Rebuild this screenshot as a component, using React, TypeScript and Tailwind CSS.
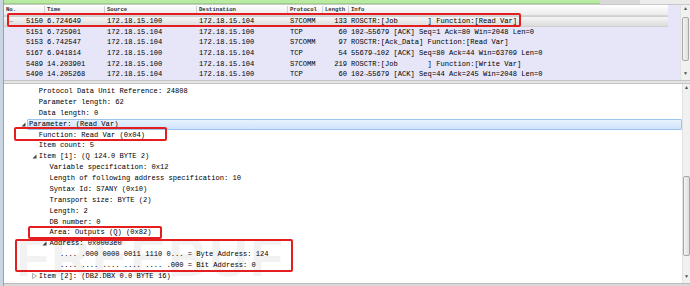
import React from "react";

const packets = [
  { no: "5150", time: "6.724649", src: "172.18.15.100", dst: "172.18.15.104", proto: "S7COMM", len: "133", info: "ROSCTR:[Job       ] Function:[Read Var]", sel: true },
  { no: "5151", time: "6.725901", src: "172.18.15.104", dst: "172.18.15.100", proto: "TCP", len: "60", info: "102→55679 [ACK] Seq=1 Ack=80 Win=2048 Len=0" },
  { no: "5153", time: "6.742547", src: "172.18.15.104", dst: "172.18.15.100", proto: "S7COMM", len: "97", info: "ROSCTR:[Ack_Data] Function:[Read Var]" },
  { no: "5167", time: "6.941814", src: "172.18.15.100", dst: "172.18.15.104", proto: "TCP", len: "54", info: "55679→102 [ACK] Seq=80 Ack=44 Win=63709 Len=0" },
  { no: "5489", time: "14.203901", src: "172.18.15.100", dst: "172.18.15.104", proto: "S7COMM", len: "219", info: "ROSCTR:[Job       ] Function:[Write Var]" },
  { no: "5490", time: "14.205268", src: "172.18.15.104", dst: "172.18.15.100", proto: "TCP", len: "60", info: "102→55679 [ACK] Seq=44 Ack=245 Win=2048 Len=0" },
];

type Line = { l: number; t: string; tog?: "open" | "closed"; hl?: boolean };

const lines: Line[] = [
  { l: 1, t: "Protocol Data Unit Reference: 24808" },
  { l: 1, t: "Parameter length: 62" },
  { l: 1, t: "Data length: 0" },
  { l: 0, t: "Parameter: (Read Var)", tog: "open", hl: true },
  { l: 1, t: "Function: Read Var (0x04)" },
  { l: 1, t: "Item count: 5" },
  { l: 1, t: "Item [1]: (Q 124.0 BYTE 2)", tog: "open" },
  { l: 2, t: "Variable specification: 0x12" },
  { l: 2, t: "Length of following address specification: 10" },
  { l: 2, t: "Syntax Id: S7ANY (0x10)" },
  { l: 2, t: "Transport size: BYTE (2)" },
  { l: 2, t: "Length: 2" },
  { l: 2, t: "DB number: 0" },
  { l: 2, t: "Area: Outputs (Q) (0x82)" },
  { l: 2, t: "Address: 0x0003e0", tog: "open" },
  { l: 3, t: ".... .000 0000 0011 1110 0... = Byte Address: 124" },
  { l: 3, t: ".... .... .... .... .... .000 = Bit Address: 0" },
  { l: 1, t: "Item [2]: (DB2.DBX 0.0 BYTE 16)", tog: "closed" },
];

const indent = ["w-[17px]", "w-[27.7px]", "w-[38.4px]", "w-[49px]"];

function Toggle({ kind }: { kind?: "open" | "closed" }) {
  if (!kind) return <span className="w-[7px] shrink-0" />;
  return (
    <span className="w-[7px] shrink-0 flex items-center">
      {kind === "open" ? (
        <svg width="5" height="5" viewBox="0 0 5 5">
          <polygon points="4.5,0.5 4.5,4.5 0.5,4.5" fill="#404040" />
        </svg>
      ) : (
        <svg width="5" height="6" viewBox="0 0 5 6">
          <polygon points="0.5,0.5 4.5,3 0.5,5.5" fill="none" stroke="#9a9a9a" strokeWidth="0.8" />
        </svg>
      )}
    </span>
  );
}

function Scrollbar({ thumb, width }: { thumb: string; width: string }) {
  return (
    <div className={`${width} shrink-0 flex flex-col bg-[#f1f1f1] border-l border-[#e2e2e2]`}>
      <div className="h-[10px] flex items-center justify-center text-[5px] text-[#505050]">▲</div>
      <div className="flex-1 flex flex-col">
        <div className={thumb} />
        <div className="flex-1" />
      </div>
      <div className="h-[10px] flex items-center justify-center text-[5px] text-[#505050]">▼</div>
    </div>
  );
}

export default function App() {
  return (
    <div className="relative w-[690px] h-[286px] overflow-hidden bg-white flex font-['Liberation_Mono',monospace] text-black">
      <div className="w-[4px] shrink-0 bg-[#c9d5e3] border-r border-[#8ea3bb]" />

      <div className="flex-1 flex flex-col min-w-0">
        <div className="h-[4px] flex shrink-0">
          <div className="w-[596px] bg-[#b9eaa2] border-b border-[#9bcf86]" />
          <div className="w-[40px] bg-[#d8d8d8]" />
          <div className="flex-1 bg-[#ececec]" />
        </div>

        <div className="h-[76px] shrink-0 flex border-t border-[#c8c8c8]">
          <div className="flex-1 flex flex-col bg-[#e6e6f8]">
            <div className="h-[11px] flex items-center text-[5.6px] font-bold text-[#303030] bg-gradient-to-b from-white to-[#ebebeb] border-b border-[#d5d5d5] w-[664px]">
              <span className="w-[41px] pl-[2px] border-r border-[#d0d0d0]">No.</span>
              <span className="w-[60px] pl-[2px] border-r border-[#d0d0d0]">Time</span>
              <span className="w-[92px] pl-[2px] border-r border-[#d0d0d0]">Source</span>
              <span className="w-[91px] pl-[2px] border-r border-[#d0d0d0]">Destination</span>
              <span className="w-[35px] pl-[2px] border-r border-[#d0d0d0]">Protocol</span>
              <span className="w-[26px] pl-[2px] border-r border-[#d0d0d0]">Length</span>
              <span className="flex-1 pl-[2px]">Info</span>
            </div>
            {packets.map((p) => (
              <div
                key={p.no}
                className={`h-[10.8px] flex items-center text-[7.1px] whitespace-pre w-[664px] ${
                  p.sel ? "bg-gradient-to-b from-[#f6f6f6] to-[#dcdcdc] border-y border-[#cfcfcf]" : ""
                }`}
              >
                <span className="w-[41px] flex justify-between pr-[2px]">
                  <span className="pl-[5px] text-[#8a8a8a]">{p.sel ? "—" : ""}</span>
                  <span>{p.no}</span>
                </span>
                <span className="w-[60px] pl-[2px]">{p.time}</span>
                <span className="w-[92px] pl-[2px]">{p.src}</span>
                <span className="w-[91px] pl-[2px]">{p.dst}</span>
                <span className="w-[35px] pl-[2px]">{p.proto}</span>
                <span className="w-[26px] pr-[2px] text-right">{p.len}</span>
                <span className="flex-1 pl-[2px]">{p.info}</span>
              </div>
            ))}
          </div>
          <Scrollbar width="w-[10px]" thumb="h-[44px] mt-[2px] mx-[1px] rounded-[2px] border border-[#a8a8a8] bg-gradient-to-r from-[#f4f4f4] to-[#dedede]" />
        </div>

        <div className="h-[4px] shrink-0 bg-[#e4e4e4] border-y border-[#c4c4c4]" />

        <div className="flex-1 flex min-h-0">
          <div className="flex-1 pt-[2px] text-[7.1px] leading-[10.88px] whitespace-pre">
            {lines.map((ln, i) => (
              <div key={i} className="h-[10.88px] flex items-center">
                <span className={`${indent[ln.l]} shrink-0`} />
                <Toggle kind={ln.tog} />
                <span
                  className={
                    ln.hl
                      ? "flex-1 h-full -ml-[1px] pl-[1px] bg-gradient-to-b from-[#e8f2fe] to-[#cfe3fb] border border-[#9cc3ea] rounded-[1px] flex items-center"
                      : ""
                  }
                >
                  {ln.t}
                </span>
              </div>
            ))}
          </div>
          <Scrollbar width="w-[8px]" thumb="h-[80px] mt-[82px] rounded-[2px] border border-[#a8a8a8] bg-gradient-to-r from-[#f4f4f4] to-[#dedede]" />
        </div>

        <div className="h-[3px] shrink-0 bg-[#d8d8d8] border-t border-[#bdbdbd]" />
      </div>

      <div className="pointer-events-none absolute left-[16px] top-[230px] text-[54px] font-bold leading-none tracking-[2px] text-black/[0.05] font-['Liberation_Sans',sans-serif]">
        FREEBUF
      </div>

      <div className="pointer-events-none absolute left-[7px] top-[13px] w-[514px] h-[14px] border-2 border-[#e41e1e] rounded-[2px]" />
      <div className="pointer-events-none absolute left-[14px] top-[127px] w-[153px] h-[14px] border-2 border-[#e41e1e] rounded-[2px]" />
      <div className="pointer-events-none absolute left-[28px] top-[226px] w-[134px] h-[13px] border-2 border-[#e41e1e] rounded-[2px]" />
      <div className="pointer-events-none absolute left-[15px] top-[239px] w-[278px] h-[33px] border-2 border-[#e41e1e] rounded-[2px]" />
    </div>
  );
}
